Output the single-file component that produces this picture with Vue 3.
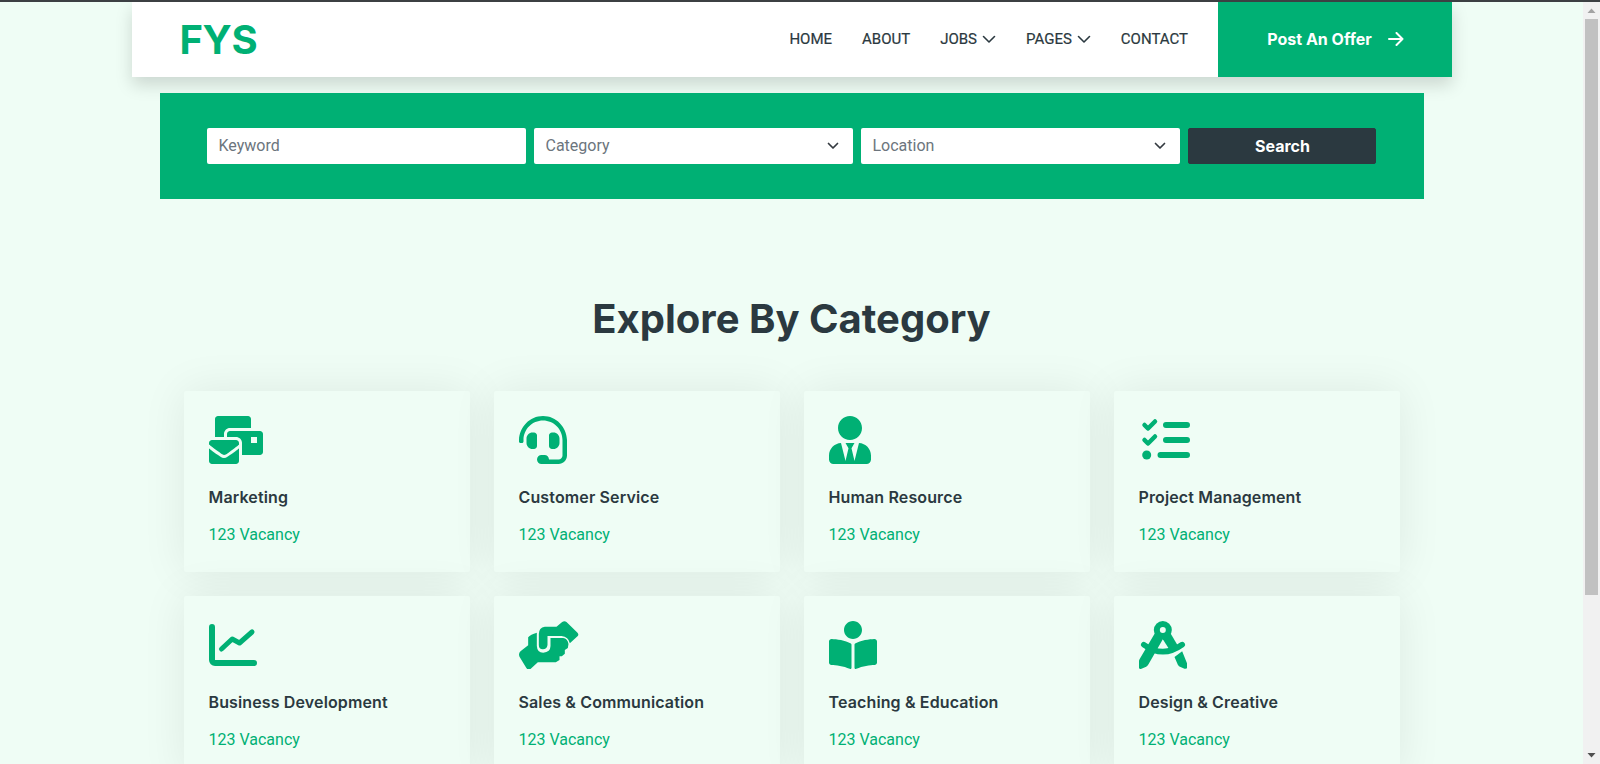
<script setup>
const navLinks = [
  { label: 'Home' },
  { label: 'About' },
  { label: 'Jobs', caret: true },
  { label: 'Pages', caret: true },
  { label: 'Contact' },
]
const categories = [
  { name: 'Marketing', vb: '0 0 576 512', w: 54, d: 'M160 448c-25.6 0-51.2-22.4-64-32-64-44.8-83.2-60.8-96-70.4V480c0 17.67 14.33 32 32 32h256c17.67 0 32-14.33 32-32V345.6c-12.8 9.6-32 25.6-96 70.4-12.8 9.6-38.4 32-64 32zm128-192H32c-17.67 0-32 14.33-32 32v16c25.6 19.2 22.4 19.2 115.2 86.4 9.6 6.4 28.8 25.6 44.8 25.6s35.2-19.2 44.8-22.4c92.8-67.2 89.6-67.2 115.2-86.4V288c0-17.67-14.33-32-32-32zm256-96H224c-17.67 0-32 14.33-32 32v32h96c33.21 0 60.59 25.42 63.71 57.82l.29-.22V416h192c17.67 0 32-14.33 32-32V192c0-17.67-14.33-32-32-32zm-32 128h-64v-64h64v64zm-352-96c0-35.29 28.71-64 64-64h224V32c0-17.67-14.33-32-32-32H96C78.33 0 64 14.33 64 32v192h96v-32z' },
  { name: 'Customer Service', vb: '0 0 512 512', w: 48, d: 'M192 208c0-17.67-14.33-32-32-32h-16c-35.35 0-64 28.65-64 64v48c0 35.35 28.65 64 64 64h16c17.67 0 32-14.33 32-32V208zm176 144c35.35 0 64-28.65 64-64v-48c0-35.35-28.65-64-64-64h-16c-17.67 0-32 14.33-32 32v112c0 17.67 14.33 32 32 32h16zM256 0C113.18 0 4.58 118.83 0 256v16c0 8.84 7.16 16 16 16h16c8.84 0 16-7.16 16-16v-16c0-114.69 93.31-208 208-208s208 93.31 208 208h-.12c.08 2.43.12 165.72.12 165.72 0 23.35-18.93 42.28-42.28 42.28H320c0-26.51-21.49-48-48-48h-32c-26.51 0-48 21.49-48 48s21.49 48 48 48h181.72c49.86 0 90.28-40.42 90.28-90.28V256C507.42 118.83 398.82 0 256 0z' },
  { name: 'Human Resource', vb: '0 0 448 512', w: 42, d: 'M224 256c70.7 0 128-57.3 128-128S294.7 0 224 0 96 57.3 96 128s57.3 128 128 128zm95.8 32.6L272 480l-32-136 32-56h-96l32 56-32 136-47.8-191.4C56.9 292 0 350.3 0 422.4V464c0 26.5 21.5 48 48 48h352c26.5 0 48-21.5 48-48v-41.6c0-72.1-56.9-130.4-128.2-133.8z' },
  { name: 'Project Management', kind: 'tasks' },
  { name: 'Business Development', kind: 'chart' },
  { name: 'Sales & Communication', kind: 'hands' },
  { name: 'Teaching & Education', vb: '0 0 512 512', w: 48, d: 'M352 96c0-53.02-42.98-96-96-96s-96 42.98-96 96 42.98 96 96 96 96-42.98 96-96zM233.59 241.1c-59.33-36.32-155.43-46.3-203.79-49.05C13.55 191.13 0 203.51 0 219.14v222.8c0 14.33 11.59 26.28 26.49 27.05 43.66 2.29 131.99 10.68 193.04 41.43 9.37 4.72 20.48-1.71 20.48-11.87V252.56c-.01-4.67-2.32-8.95-6.42-11.46zm248.61-49.05c-48.35 2.74-144.46 12.73-203.78 49.05-4.1 2.51-6.41 6.96-6.41 11.63v245.79c0 10.19 11.14 16.63 20.54 11.9 61.04-30.72 149.32-39.11 192.97-41.4 14.9-.78 26.49-12.73 26.49-27.06V219.14c-.01-15.63-13.56-28.01-29.81-27.09z' },
  { name: 'Design & Creative', kind: 'compass' },
]
</script>

<template>
  <div class="window">
    <div class="topline"></div>
    <div class="body">
      <main class="page">
        <header class="navbar">
          <a class="logo">FYS</a>
          <nav class="links">
            <a v-for="l in navLinks" :key="l.label" class="link">
              {{ l.label }}
              <svg v-if="l.caret" class="caret" viewBox="0 0 14 9" width="14" height="9" aria-hidden="true">
                <path d="M1.5 1.5 7 7l5.5-5.5" fill="none" stroke="currentColor" stroke-width="1.6" stroke-linecap="round" stroke-linejoin="round" />
              </svg>
            </a>
          </nav>
          <a class="offer">
            Post An Offer
            <svg class="arrow" viewBox="0 0 16 14" width="16" height="14" aria-hidden="true">
              <path d="M1 7h13.500M8.500 1l6 6-6 6" fill="none" stroke="currentColor" stroke-width="2" stroke-linecap="round" stroke-linejoin="round" />
            </svg>
          </a>
        </header>

        <section class="search">
          <input class="field grow" placeholder="Keyword" />
          <div class="selectwrap grow">
            <select class="field">
              <option>Category</option>
            </select>
            <svg class="chev" viewBox="0 0 12 8" width="12" height="8" aria-hidden="true">
              <path d="M1.500 1.500 6 6l4.500-4.500" fill="none" stroke="#343a40" stroke-width="1.700" stroke-linecap="round" stroke-linejoin="round" />
            </svg>
          </div>
          <div class="selectwrap grow">
            <select class="field">
              <option>Location</option>
            </select>
            <svg class="chev" viewBox="0 0 12 8" width="12" height="8" aria-hidden="true">
              <path d="M1.500 1.500 6 6l4.500-4.500" fill="none" stroke="#343a40" stroke-width="1.700" stroke-linecap="round" stroke-linejoin="round" />
            </svg>
          </div>
          <button class="go">Search</button>
        </section>

        <section class="explore">
          <h1 class="title">Explore By Category</h1>
          <div class="grid">
            <article v-for="c in categories" :key="c.name" class="card">
              <svg v-if="c.kind === 'chart'" class="icon" viewBox="0 0 48 48" width="48" height="48" aria-hidden="true">
                <path d="M3 6v33a3 3 0 0 0 3 3h39" fill="none" stroke="#00b074" stroke-width="6" stroke-linecap="round" stroke-linejoin="round" />
                <path d="M12.500 28 23.200 18l7.300 4L43 11" fill="none" stroke="#00b074" stroke-width="5" stroke-linecap="round" stroke-linejoin="round" />
              </svg>
              <svg v-else-if="c.kind === 'tasks'" class="icon" viewBox="0 0 52 48" width="52" height="48" aria-hidden="true">
                <g fill="none" stroke="#00b074" stroke-linecap="round" stroke-linejoin="round">
                  <path d="M5.500 9 9 12.500l7-7M5.500 24 9 27.500l7-7" stroke-width="4.500" />
                  <path d="M27 9h21M27 24h21M21.500 39H48" stroke-width="6" />
                </g>
                <circle cx="7.700" cy="39" r="4.500" fill="#00b074" />
              </svg>
              <svg v-else-if="c.kind === 'hands'" class="icon" viewBox="55.500 33 180 144" width="60" height="48" aria-hidden="true">
                <path fill="#00b074" d="M115 72Q115 53 133 50L168 50 185 36Q192 31 198 36L231 68Q236 74 231 79L208 100Q204 80 183 78L141 78 141 105Q139 118 127 118 115 118 115 105Z" />
                <path fill="#00b074" d="M109 68 109 108Q110 128 128 128 150 126 150 108L150 84 188 84Q201 85 204 102L202 114 193 120 193 131 184 139 177 139 177 150 166 157 112 157 90 177Q83 181 78 175L57 140Q53 131 60 124L83 106 83 82Q90 73 109 68Z" />
              </svg>
              <svg v-else-if="c.kind === 'compass'" class="icon" viewBox="25.500 33 144 144" width="48" height="48" aria-hidden="true">
                <circle cx="97" cy="60" r="27" fill="#00b074" />
                <path fill="#00b074" d="M74 68 28 146Q25 151 25 158L25 172Q26 179 33 176L47 170Q51 168 54 163L97 88 97 60Z" />
                <path fill="#00b074" d="M120 70 146 114 116 118 97 88 97 60Z" />
                <path fill="none" stroke="#00b074" stroke-width="17" stroke-linecap="round" d="M40 104Q97 146 155 104" />
                <path fill="#00b074" d="M132 141 155 124 172 166Q173 178 162 176L150 171Q145 169 142 164Z" />
                <circle cx="97" cy="60" r="9" fill="#effdf5" />
              </svg>
              <svg v-else class="icon" :viewBox="c.vb" :width="c.w" height="48" aria-hidden="true">
                <path :d="c.d" fill="#00b074" />
              </svg>
              <h6 class="name">{{ c.name }}</h6>
              <p class="count">123 Vacancy</p>
            </article>
          </div>
        </section>
      </main>

      <div class="scrollbar" aria-hidden="true">
        <svg class="sb-arrow" viewBox="0 0 17 17" width="17" height="17"><path d="M4.500 11 8.500 6.500 12.500 11z" fill="#a3a3a3" /></svg>
        <div class="sb-track"><div class="sb-thumb"></div></div>
        <svg class="sb-arrow" viewBox="0 0 17 17" width="17" height="17"><path d="M4.500 6 8.500 10.500 12.500 6z" fill="#505050" /></svg>
      </div>
    </div>
  </div>
</template>

<style>
html, body { margin: 0; overflow: hidden; }
</style>

<style scoped>
.window {
  width: 1600px;
  height: 764px;
  overflow: hidden;
  display: flex;
  flex-direction: column;
  background: #effdf5;
  font-family: Roboto, "Liberation Sans", sans-serif;
  font-size: 16px;
  line-height: 1.5;
  color: #6c757d;
}
.topline { height: 2px; background: #3c4043; flex: none; }
.body { flex: 1; display: flex; min-height: 0; }
.page { width: 1583px; flex: none; overflow: hidden; }

.navbar {
  position: relative;
  box-sizing: border-box;
  width: 1320px;
  height: 75px;
  margin: 0 auto 16px;
  display: flex;
  align-items: center;
  background: #fff;
  box-shadow: 0 8px 16px rgba(0, 0, 0, 0.15);
}
.logo {
  margin-left: 48px;
  font-family: Inter, sans-serif;
  font-weight: 700;
  font-size: 40px;
  line-height: 48px;
  letter-spacing: -0.4px;
  color: #00b074;
}
.links { margin-left: auto; display: flex; gap: 30px; margin-right: 29.5px; }
.link {
  display: flex;
  align-items: center;
  gap: 5px;
  font-size: 15px;
  font-weight: 400;
  -webkit-text-stroke: 0.2px #2b3940;
  color: #2b3940;
  text-transform: uppercase;
}
.offer {
  box-sizing: border-box;
  width: 234px;
  height: 100%;
  padding: 0 0 2px 2px;
  display: flex;
  align-items: center;
  justify-content: center;
  gap: 16px;
  background: #00b074;
  color: #fff;
  font-family: Inter, sans-serif;
  font-weight: 700;
  font-size: 16px;
}
.arrow { flex: none; }

.search {
  position: relative;
  box-sizing: border-box;
  width: 1264px;
  height: 106px;
  margin: 0 auto;
  padding: 35px 48px 35px 47px;
  display: flex;
  gap: 8px;
  background: #00b074;
}
.grow { width: 319px; flex: none; }
.field {
  box-sizing: border-box;
  height: 36px;
  padding: 0 12px 2px;
  border: 0;
  border-radius: 2px;
  background: #fff;
  font-family: Roboto, sans-serif;
  font-size: 16px;
  color: #6c757d;
  outline: none;
  appearance: none;
}
.field::placeholder { color: #6c757d; opacity: 1; }
.selectwrap { position: relative; }
.selectwrap .field { width: 100%; display: block; }
.chev { position: absolute; right: 14px; top: 14px; pointer-events: none; }
.go {
  box-sizing: border-box;
  flex: 1;
  height: 36px;
  padding: 0 0 0 2px;
  border: 1px solid #2b3940;
  border-radius: 2px;
  background: #2b3940;
  color: #fff;
  font-family: Inter, sans-serif;
  font-weight: 700;
  font-size: 16px;
}

.explore { width: 1216px; margin: 0 auto; padding-top: 96px; }
.title {
  margin: 0 0 48px;
  text-align: center;
  font-family: Inter, sans-serif;
  font-weight: 700;
  font-size: 40px;
  line-height: 48px;
  color: #2b3940;
}
.grid { display: grid; grid-template-columns: repeat(4, 286px); gap: 24px; }
.card {
  box-sizing: border-box;
  height: 181px;
  padding: 25px;
  border-radius: 2px;
  background: #effdf5;
  box-shadow: 0 0 45px rgba(0, 0, 0, 0.08);
}
.icon { display: block; margin-bottom: 24px; }
.name {
  margin: 0 0 16px;
  font-family: Inter, sans-serif;
  font-weight: 600;
  font-size: 16px;
  line-height: 19.2px;
  letter-spacing: 0.13px;
  color: #2b3940;
}
.count { margin: 0; color: #00b074; }

.scrollbar {
  width: 17px;
  flex: none;
  display: flex;
  flex-direction: column;
  background: #f1f1f1;
}
.sb-arrow { display: block; flex: none; }
.sb-track { flex: 1; }
.sb-thumb { width: 13px; height: 576px; margin-left: 2px; background: #c1c1c1; }
</style>
